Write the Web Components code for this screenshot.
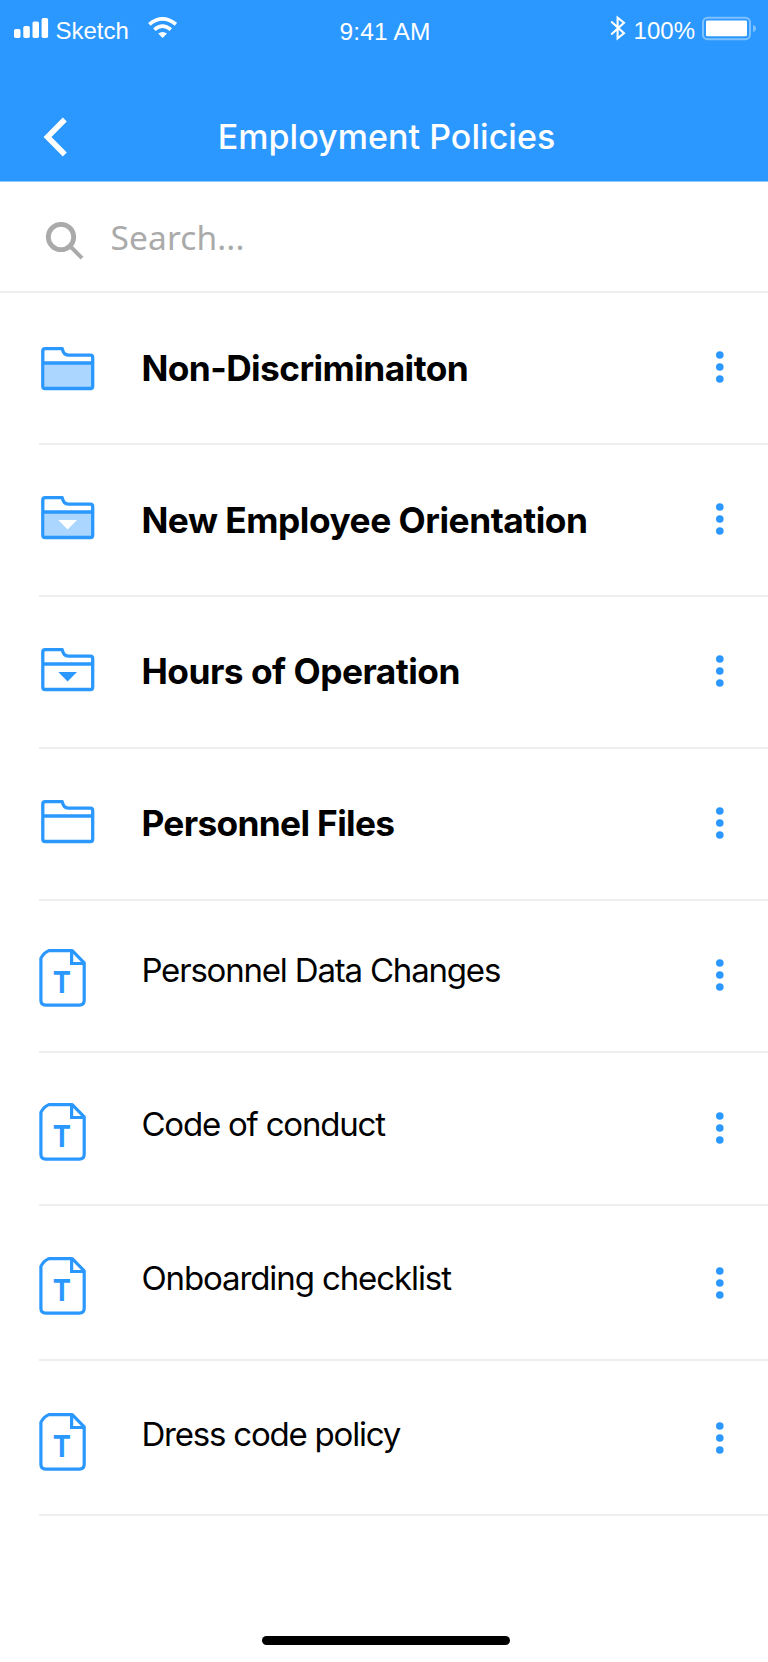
<!DOCTYPE html>
<html lang="en">
<head>
<meta charset="utf-8">
<title>Employment Policies</title>
<style>
  body {
    margin: 0;
    background: #fff;
    font-family: Inter, "Liberation Sans", sans-serif;
  }
</style>
</head>
<body>
<policy-screen>
  <status-bar slot="header" carrier="Sketch" time="9:41 AM" battery="100%"></status-bar>
  <nav-bar slot="header">Employment Policies</nav-bar>
  <search-bar>Search...</search-bar>
  <policy-row icon="folder-filled" style="--icon-y: 53.5px; --label-y: 56px; --dots-y: 58px; --spacing: -0.56px">Non-Discriminaiton</policy-row>
  <policy-row icon="folder-filled-open" style="--label-y: 56px; --spacing: -0.47px">New Employee Orientation</policy-row>
  <policy-row icon="folder-open" style="--spacing: -0.5px">Hours of Operation</policy-row>
  <policy-row icon="folder" style="--spacing: -0.66px">Personnel Files</policy-row>
  <policy-row icon="doc" style="--icon-y: 48px; --label-y: 49px; --spacing: -1.19px">Personnel Data Changes</policy-row>
  <policy-row icon="doc" style="--row-h: 153px; --icon-y: 50px; --label-y: 51px; --dots-y: 59.4px; --spacing: -1.2px">Code of conduct</policy-row>
  <policy-row icon="doc" style="--row-h: 155px; --icon-y: 51.3px; --label-y: 52px; --dots-y: 60.5px; --spacing: -1.1px">Onboarding checklist</policy-row>
  <policy-row icon="doc" style="--row-h: 155px; --icon-y: 52px; --label-y: 53px; --dots-y: 61px; --spacing: -1.2px">Dress code policy</policy-row>
</policy-screen>

<script>
const define = (name, html, setup) => {
    const template = document.createElement('template');
    template.innerHTML = html;

    customElements.define(name, class extends HTMLElement {
        constructor() {
            super();
            this.attachShadow({ mode: 'open' }).appendChild(
                template.content.cloneNode(true)
            );
        }

        connectedCallback() {
            if (setup) setup(this, this.shadowRoot);
        }
    });
};

define('status-bar', `
<style>
  :host {
    display: grid;
    grid-template-columns: 1fr auto 1fr;
    height: 60px;
    box-sizing: border-box;
    padding: 15px 12px 0 14px;
    font: 24px/28px "Liberation Sans", Arial, sans-serif;
    color: #fff;
  }
  .side {
    display: flex;
    align-items: flex-start;
  }
  .right {
    justify-content: flex-end;
  }
  svg {
    display: block;
    flex: none;
  }
  .carrier {
    margin: 2px 0 0 6.5px;
    width: 92px;
  }
  .time {
    margin-top: 3px;
    font-size: 24.5px;
    letter-spacing: 0.15px;
  }
  .battery {
    margin: 2px 7px 0 8px;
  }
</style>
<div class="side">
  <svg width="35" height="24" fill="#fff">
    <rect y="14" width="6.5" height="9" rx="1.7"/>
    <rect x="9.3" y="11" width="6.5" height="12" rx="1.7"/>
    <rect x="18.5" y="6.5" width="6.5" height="16.5" rx="1.7"/>
    <rect x="27.6" y="3" width="6.5" height="20" rx="1.7"/>
  </svg>
  <span class="carrier"></span>
  <svg width="30" height="24" viewBox="0 0 30 24">
    <g fill="none" stroke="#fff" stroke-width="3.7">
      <path d="M1.3 9.3 Q14.5 -1.7 27.9 9.3"/>
      <path d="M6.4 14.7 Q14.5 7.7 22.8 14.7"/>
    </g>
    <path d="M10.2 18.6 Q14.6 15.2 19 18.6 L14.6 23 Z" fill="#fff"/>
  </svg>
</div>
<span class="time"></span>
<div class="side right">
  <svg width="16" height="26" viewBox="0 0 16 26">
    <path d="M1.2 6.5 L14 18.2 L7.6 23.3 V2.6 L14 7.8 L1.2 19.5" fill="none" stroke="#fff" stroke-width="2.1"/>
  </svg>
  <span class="battery"></span>
  <svg width="54" height="26" viewBox="0 0 54 26">
    <rect x="1" y="2.8" width="47" height="21.4" rx="4.5" fill="none" stroke="#fff" stroke-opacity=".4" stroke-width="2"/>
    <rect x="4" y="5.6" width="41" height="15.6" rx="1.3" fill="#fff"/>
    <path d="M51 10 Q54 11 54 13.5 Q54 16 51 17 Z" fill="#fff" fill-opacity=".4"/>
  </svg>
</div>
`, (el, root) => {
    ['carrier', 'time', 'battery'].forEach((key) => {
        root.querySelector('.' + key).textContent = el.getAttribute(key);
    });
});

define('nav-bar', `
<style>
  :host {
    display: grid;
    grid-template-columns: 100px 1fr 95px;
    height: 121px;
    color: #fff;
  }
  svg {
    display: block;
    margin: 55px 0 0 42px;
  }
  .title {
    margin-top: 57px;
    text-align: center;
    font-size: 34px;
    font-weight: 500;
    line-height: 40px;
    letter-spacing: 0.05px;
    white-space: nowrap;
  }
</style>
<svg width="28" height="44" fill="none" stroke="#fff" stroke-width="5.6">
  <path d="M22.8 4.5 L5.5 22 L22.8 39.5"/>
</svg>
<div class="title"><slot></slot></div>
`);

define('search-bar', `
<style>
  :host {
    display: flex;
    height: 110px;
    box-sizing: border-box;
    padding-left: 45px;
    border-bottom: 2px solid #eee;
    color: #aaa;
  }
  svg {
    display: block;
    margin-top: 36.5px;
  }
  .placeholder {
    margin: 34px 0 0 26.6px;
    font: 33.5px/40px "Noto Sans", "Open Sans", sans-serif;
    letter-spacing: 0.1px;
  }
</style>
<svg width="39" height="40" fill="none" stroke="#aaa">
  <circle cx="16" cy="17" r="12.7" stroke-width="4.8"/>
  <path d="M25.5 26.5 L37 38.2" stroke-width="4"/>
</svg>
<div class="placeholder"><slot></slot></div>
`);

const folderIcon = (fill, arrow) => `
<svg width="55" height="45" viewBox="0 0 55 45">
  <path d="M3.5 16H51V41.5H3.5Z" fill="${fill}"/>
  <g fill="none" stroke="#2b98ff" stroke-width="3.3" stroke-linejoin="round">
    <path d="M4.1 1.7 H21.2 C22 5.6 23.4 8.2 27.3 8.2 H49.4 Q51.7 8.2 51.7 10.5 V39.2 Q51.7 41.5 49.4 41.5 H4.1 Q1.8 41.5 1.8 39.2 V4 Q1.8 1.7 4.1 1.7 Z"/>
    <path d="M2 16H51.5"/>
  </g>
  ${arrow ? `<path d="M17.3 24H36L26.6 33.6Z" fill="${arrow}"/>` : ''}
</svg>`;

const icons = {
    'folder': folderIcon('none'),
    'folder-open': folderIcon('none', '#2b98ff'),
    'folder-filled': folderIcon('#aad6ff'),
    'folder-filled-open': folderIcon('#aad6ff', '#fff'),
    'doc': `
<svg width="50" height="60" viewBox="0 0 50 60">
  <g fill="none" stroke="#2b98ff" stroke-width="3.2">
    <path d="M9.8 1.6 H33.2 L45.2 13.8 V51.3 Q45.2 56.2 40.3 56.2 H6.8 Q1.9 56.2 1.9 51.3 V9.4 Q4.6 3.8 9.8 1.6 Z" stroke-linejoin="round"/>
    <path d="M32.6 1.8 V14.5 H45"/>
  </g>
  <text x="22.8" y="44.2" text-anchor="middle" textLength="18.2" lengthAdjust="spacingAndGlyphs" font-size="30.4" font-weight="700" fill="#2b98ff">T</text>
</svg>`,
};

define('policy-row', `
<style>
  :host {
    display: flex;
    align-items: flex-start;
    height: var(--row-h, 152px);
    box-sizing: border-box;
    margin-left: 39px;
    border-bottom: 2px solid #eee;
    color: #000;
  }
  .icon {
    width: 99px;
    padding: var(--icon-y, 51px) 0 0 2px;
    flex: none;
  }
  svg {
    display: block;
  }
  .label {
    flex: 1;
    padding: var(--label-y, 55px) 0 0 1.4px;
    font-size: 35.3px;
    font-weight: 700;
    line-height: 40px;
    letter-spacing: var(--spacing, 0);
    white-space: nowrap;
  }
  :host([icon="doc"]) .icon {
    width: 101px;
    padding-left: 0;
  }
  :host([icon="doc"]) .label {
    font-size: 33px;
    font-weight: 400;
  }
  .dots {
    margin: var(--dots-y, 57.7px) 44px 0 0;
  }
</style>
<div class="icon"></div>
<div class="label"><slot></slot></div>
<svg class="dots" width="8" height="32" fill="#2b98ff">
  <circle cx="3.8" cy="4" r="3.8"/>
  <circle cx="3.8" cy="16" r="3.8"/>
  <circle cx="3.8" cy="28" r="3.8"/>
</svg>
`, (el, root) => {
    root.querySelector('.icon').innerHTML = icons[el.getAttribute('icon')];
});

define('policy-screen', `
<style>
  :host {
    display: flex;
    flex-direction: column;
    height: 1662px;
    overflow: hidden;
  }
  header {
    background: #2b98ff;
    border-bottom: 1px solid #92caff;
    box-sizing: border-box;
    height: 182px;
    margin-bottom: 1px;
  }
  .home {
    width: 248.5px;
    height: 9.4px;
    margin: auto auto 16.8px 261.6px;
    border-radius: 5px;
    background: #000;
  }
</style>
<header><slot name="header"></slot></header>
<slot></slot>
<div class="home"></div>
`);
</script>
</body>
</html>
